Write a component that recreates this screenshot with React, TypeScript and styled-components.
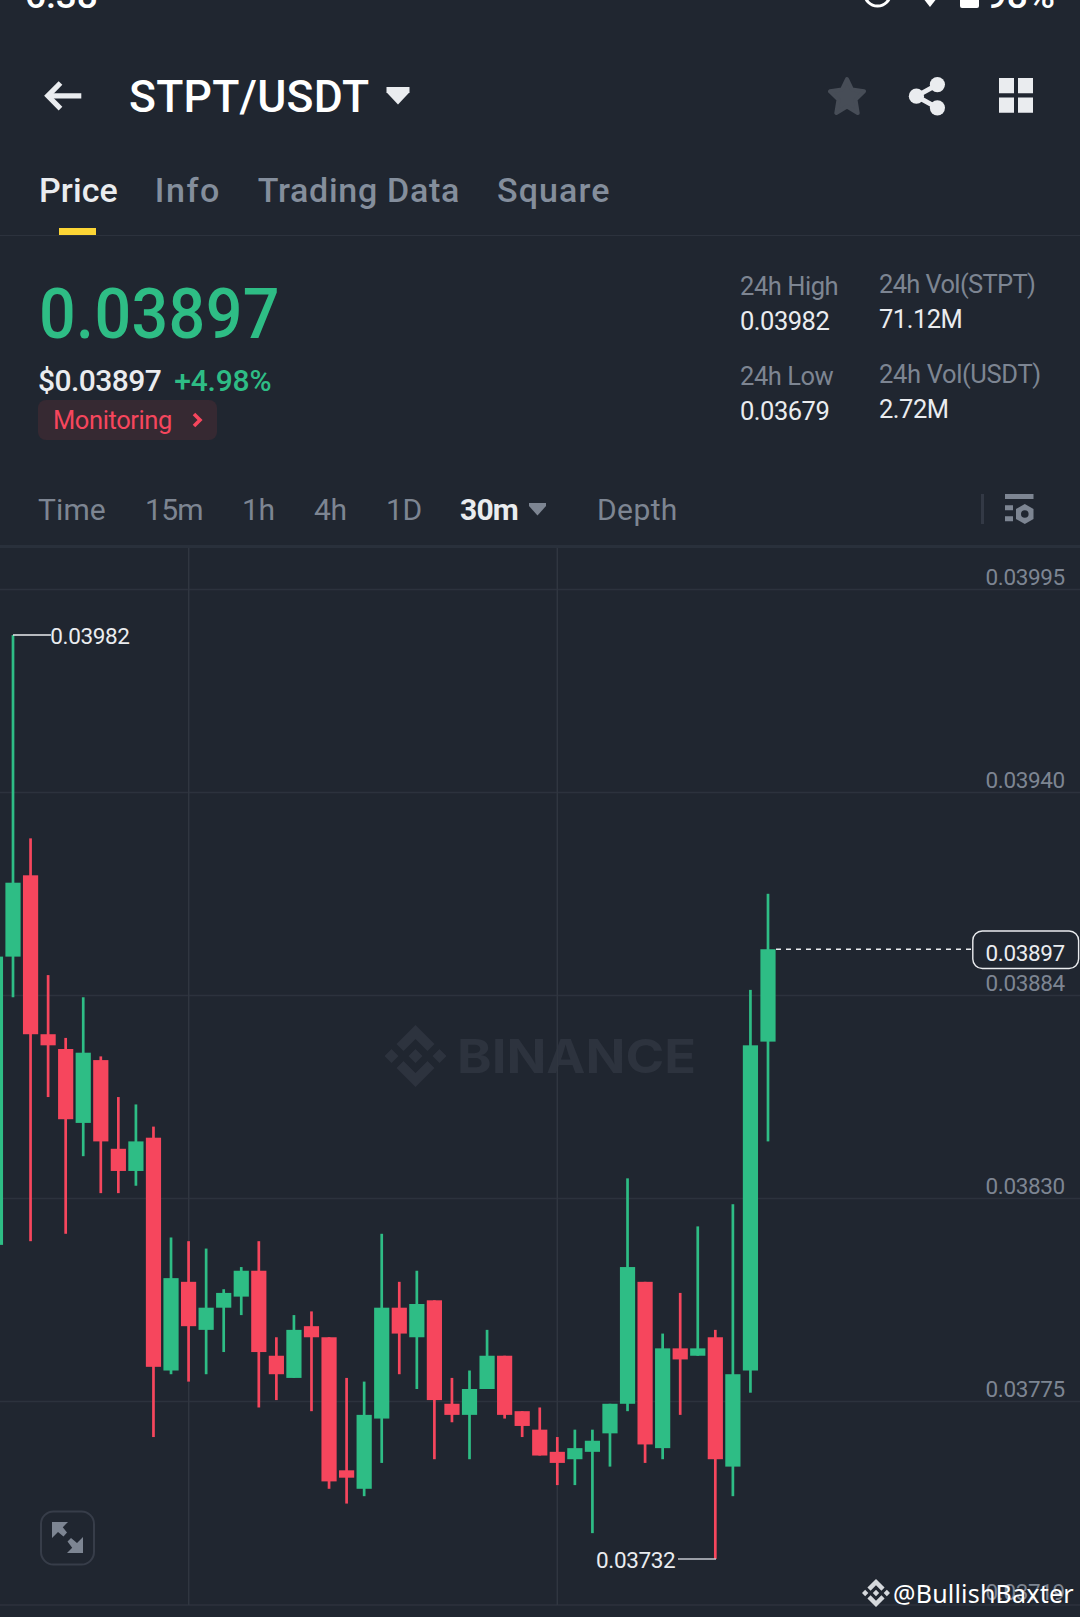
import React from "react";
import styled, { createGlobalStyle } from "styled-components";

const c = {
  bg: "#202630",
  line: "#2c323d",
  text: "#eaecef",
  muted: "#848e9c",
  dim: "#7d8592",
  green: "#2ebd85",
  red: "#f6465d",
  yellow: "#fcd535",
};

const GlobalStyle = createGlobalStyle`
  html, body { margin: 0; padding: 0; background: ${c.bg}; }
  * { box-sizing: border-box; }
`;

const Screen = styled.main`
  position: relative;
  display: flex;
  flex-direction: column;
  width: 1080px;
  height: 1617px;
  overflow: hidden;
  background: ${c.bg};
  color: ${c.text};
  font-family: Roboto, "Liberation Sans", sans-serif;
`;

const StatusBar = styled.div`
  display: flex;
  align-items: center;
  justify-content: space-between;
  flex: none;
  height: 52px;
  margin-top: -31px;
  padding: 0 25px 0 25px;
  color: #fff;
  font-size: 37px;
  font-weight: 500;
`;

const StatusIcons = styled.div`
  display: flex;
  align-items: center;
  gap: 7px;
`;

const Header = styled.header`
  display: flex;
  align-items: center;
  flex: none;
  height: 149px;
  padding: 0 46px 0 43px;
`;

const Pair = styled.h1`
  margin: 2px 17px 0 46px;
  color: #fff;
  font-size: 44.5px;
  font-weight: 500;
  line-height: 60px;
  letter-spacing: 0.25px;
`;

const Actions = styled.div`
  display: flex;
  align-items: center;
  gap: 42px;
  margin-left: auto;
`;

const Tabs = styled.nav`
  display: flex;
  flex: none;
  gap: 37px;
  height: 66px;
  padding-left: 39px;
  border-bottom: 1px solid ${c.line};
`;

const Tab = styled.div<{ $active?: boolean; $spacing: number }>`
  display: flex;
  flex-direction: column;
  justify-content: space-between;
  color: ${(p) => (p.$active ? c.text : c.muted)};
  font-size: 34px;
  font-weight: 500;
  line-height: 40px;
  letter-spacing: ${(p) => p.$spacing}px;
`;

const TabMarker = styled.div`
  width: 37px;
  height: 7px;
  margin-left: 20px;
  background: ${c.yellow};
`;

const Summary = styled.section`
  display: flex;
  flex: none;
  height: 240px;
  padding-left: 38px;
`;

const Quote = styled.div`
  display: flex;
  flex-direction: column;
  align-items: flex-start;
  width: 702px;
  padding-top: 36px;
`;

const LastPrice = styled.div`
  height: 83px;
  margin-left: 1px;
  color: ${c.green};
  font-size: 71px;
  font-weight: 500;
  line-height: 84px;
  letter-spacing: 0.4px;
  transform: scaleX(0.91);
  transform-origin: left center;
`;

const FiatRow = styled.div`
  display: flex;
  gap: 13px;
  margin-top: 6px;
  font-size: 30px;
  font-weight: 500;
  line-height: 39px;
  letter-spacing: -0.55px;
`;

const Change = styled.span`
  color: ${c.green};
  letter-spacing: -0.2px;
`;

const Tag = styled.div`
  display: flex;
  align-items: center;
  gap: 20px;
  width: 179px;
  height: 40px;
  padding-left: 15px;
  border-radius: 8px;
  background: #362932;
  color: ${c.red};
  font-size: 25.5px;
  letter-spacing: -0.4px;
`;

const StatColumn = styled.dl<{ $width: number; $top: number }>`
  display: flex;
  flex-direction: column;
  flex: none;
  width: ${(p) => p.$width}px;
  margin: 0;
  padding-top: ${(p) => p.$top}px;
  font-size: 25.5px;
  line-height: 35px;
  white-space: nowrap;
`;

const StatLabel = styled.dt<{ $spacing?: number }>`
  color: ${c.dim};
  letter-spacing: ${(p) => p.$spacing ?? -0.45}px;
`;

const StatValue = styled.dd`
  margin: 0 0 20px;
  color: ${c.text};
  letter-spacing: -0.5px;
`;

const Intervals = styled.nav`
  display: grid;
  grid-template-columns: 107px 97px 72px 72px 74px 137px 384px auto;
  align-items: center;
  flex: none;
  height: 72px;
  padding-left: 38px;
  padding-bottom: 3px;
  border-bottom: 3px solid #29303b;
`;

const Interval = styled.div<{ $active?: boolean; $spacing?: number }>`
  display: flex;
  align-items: center;
  gap: 11px;
  color: ${(p) => (p.$active ? c.text : c.dim)};
  font-size: 30px;
  font-weight: ${(p) => (p.$active ? 700 : 400)};
  letter-spacing: ${(p) => p.$spacing ?? -0.4}px;
`;

const Settings = styled.div`
  display: flex;
  align-items: center;
  gap: 21px;
`;

const Separator = styled.div`
  width: 3px;
  height: 30px;
  background: #333945;
`;

const ChartArea = styled.section`
  flex: none;
  height: 1069px;
`;

const Credit = styled.div`
  position: absolute;
  left: 862px;
  top: 1575px;
  display: flex;
  align-items: center;
  gap: 3px;
  height: 36px;
  color: #fff;
  font-family: "Noto Sans", sans-serif;
  font-size: 25px;
  letter-spacing: 0.2px;
  white-space: nowrap;
`;

type Candle = [open: number, high: number, low: number, close: number];

const candles: Candle[] = [
  [3817, 3895, 3817, 3895],
  [3895, 3982, 3884, 3915],
  [3917, 3927, 3818, 3874],
  [3874, 3890, 3857, 3871],
  [3870, 3873, 3820, 3851],
  [3850, 3884, 3841, 3869],
  [3867, 3868, 3831, 3845],
  [3843, 3857, 3831, 3837],
  [3837, 3855, 3833, 3845],
  [3846, 3849, 3765, 3784],
  [3783, 3819, 3782, 3808],
  [3807, 3818, 3780, 3795],
  [3794, 3816, 3782, 3800],
  [3800, 3805, 3788, 3804],
  [3803, 3811, 3798, 3810],
  [3810, 3818, 3773, 3788],
  [3787, 3792, 3775, 3782],
  [3781, 3798, 3781, 3794],
  [3795, 3799, 3772, 3792],
  [3792, 3792, 3751, 3753],
  [3756, 3781, 3747, 3754],
  [3751, 3780, 3749, 3771],
  [3770, 3820, 3758, 3800],
  [3800, 3807, 3782, 3793],
  [3792, 3810, 3778, 3801],
  [3802, 3802, 3759, 3775],
  [3774, 3781, 3769, 3771],
  [3771, 3783, 3759, 3778],
  [3778, 3794, 3778, 3787],
  [3787, 3787, 3770, 3771],
  [3772, 3772, 3765, 3768],
  [3767, 3773, 3760, 3760],
  [3761, 3765, 3752, 3758],
  [3759, 3767, 3752, 3762],
  [3761, 3767, 3739, 3764],
  [3766, 3774, 3757, 3774],
  [3774, 3835, 3772, 3811],
  [3807, 3807, 3758, 3763],
  [3762, 3793, 3759, 3789],
  [3789, 3804, 3771, 3786],
  [3787, 3822, 3787, 3789],
  [3792, 3794, 3732, 3759],
  [3757, 3828, 3749, 3782],
  [3783, 3886, 3777, 3871],
  [3872, 3912, 3845, 3897],
];

const CHART_TOP = 548;
const priceY = (ticks: number) => 635.1 + (3982 - ticks) * 3.6956;
const candleX = (index: number) => 13 + (index - 1) * 17.558;

const gridRows = [
  { y: 589.5, label: "0.03995" },
  { y: 792.5, label: "0.03940" },
  { y: 995.5, label: "0.03884" },
  { y: 1198.5, label: "0.03830" },
  { y: 1401.5, label: "0.03775" },
  { y: 1605, label: "0.03719" },
];

const ChartLabel = styled.text<{ $tone?: string }>`
  fill: ${(p) => p.$tone ?? c.dim};
  font-size: 22.5px;
  letter-spacing: -0.35px;
`;

const Brand = styled.text`
  fill: #2d333e;
  font-family: Inter, sans-serif;
  font-size: 46.5px;
  font-weight: 700;
`;

const BrandMark = ({ x = 0, y = 0, size, color }: { x?: number; y?: number; size: number; color: string }) => (
  <svg x={x} y={y} width={size} height={size} viewBox="0 0 62 62" fill={color}>
    <path d="M31 0 50 19 43 26 31 14 19 26 12 19Z" />
    <path d="M31 62 50 43 43 36 31 48 19 36 12 43Z" />
    <path d="M31 24 38 31 31 38 24 31ZM7 24 14 31 7 38 0 31ZM55 24 62 31 55 38 48 31Z" />
  </svg>
);

const Chart = () => (
  <svg width="1080" height="1069" viewBox={`0 ${CHART_TOP} 1080 1069`} display="block">
    <BrandMark x={384.5} y={1025} size={62} color="#2d333e" />
    <Brand x="457" y="1073" textLength="239" lengthAdjust="spacingAndGlyphs">BINANCE</Brand>
    {gridRows.map((row) => (
      <g key={row.label}>
        <line x1="0" x2="1080" y1={row.y} y2={row.y} stroke={c.line} strokeWidth="1.5" />
        <ChartLabel x="985.5" y={row.y - 5}>{row.label}</ChartLabel>
      </g>
    ))}
    {[188.7, 557.3].map((x) => (
      <line key={x} x1={x} x2={x} y1="548" y2="1605" stroke="#303640" strokeWidth="1.5" />
    ))}
    {candles.map(([open, high, low, close], i) => {
      const x = candleX(i);
      const top = priceY(Math.max(open, close));
      return (
        <g key={i} fill={close >= open ? c.green : c.red}>
          <rect x={x - 1.35} width="2.7" y={priceY(high)} height={priceY(low) - priceY(high)} />
          <rect x={x - 7.6} width="15.2" y={top} height={priceY(Math.min(open, close)) - top} />
        </g>
      );
    })}
    <line x1="13" x2="51" y1="635" y2="635" stroke={c.text} strokeWidth="1.5" />
    <ChartLabel x="50.3" y="644.3" $tone={c.text}>0.03982</ChartLabel>
    <line x1="678" x2="716" y1="1559" y2="1559" stroke="#c3c7ce" strokeWidth="1.5" />
    <ChartLabel x="596" y="1568" $tone={c.text}>0.03732</ChartLabel>
    <line x1="776" x2="972" y1="949.3" y2="949.3" stroke={c.text} strokeWidth="1.5" strokeDasharray="5 5" />
    <rect x="972.8" y="931" width="105.8" height="37.5" rx="9.5" fill={c.bg} stroke={c.text} strokeWidth="1.4" />
    <ChartLabel x="985.5" y="961" $tone={c.text}>0.03897</ChartLabel>
    <rect x="41" y="1511.5" width="53" height="53" rx="12.5" fill={c.bg} stroke="#373d49" strokeWidth="2" />
    <g fill={c.dim}>
      <path d="M52 1522H68L62.8 1527.2 67 1532.5 63.5 1536.5 58 1532 52 1538Z" />
      <path d="M83 1553H67L72.2 1547.8 67.5 1541.5 71 1538 77 1543 83 1537Z" />
    </g>
  </svg>
);

const App = () => (
  <>
    <GlobalStyle />
    <Screen>
      <StatusBar>
        <span>6:38</span>
        <StatusIcons>
          <svg width="120" height="52" viewBox="859 -31 120 52">
            <circle cx="877.5" cy="-7" r="13" fill="none" stroke="#fff" strokeWidth="3" />
            <path d="M912-16Q930-28 948-16L930 7Z" fill="#fff" />
            <rect x="960" y="-20" width="19" height="28" rx="2" fill="#fff" />
          </svg>
          <span>98%</span>
        </StatusIcons>
      </StatusBar>

      <Header>
        <svg width="40" height="40" viewBox="43 76 40 40" fill="none" stroke={c.text} strokeWidth="5.2">
          <path d="M81.3 95.8H48" />
          <path d="M60.5 83 47.8 95.8 60.5 108.6" />
        </svg>
        <Pair>STPT/USDT</Pair>
        <svg width="24" height="18" viewBox="0 0 24 18" fill={c.text}>
          <path d="M.5 0H23.5V5.3L12 17.5.5 5.3Z" />
        </svg>
        <Actions>
          <svg width="38" height="40" viewBox="0 0 38 40" fill="#474d57" stroke="#474d57" strokeWidth="4" strokeLinejoin="round">
            <path d="M19 3 24 13.5 36 15.3 27.5 23.7 29.7 37 19 30.6 8.3 37 10.5 23.7 2 15.3 14 13.5Z" />
          </svg>
          <svg width="38" height="40" viewBox="909 75 38 40" fill={c.text}>
            <path d="M938.4 83.6 917.4 95.2 938.4 106.8" fill="none" stroke={c.text} strokeWidth="4.8" />
            <circle cx="938.4" cy="83.6" r="7.6" />
            <circle cx="917.4" cy="95.2" r="7.6" />
            <circle cx="938.4" cy="106.8" r="7.6" />
          </svg>
          <svg width="46" height="35" viewBox="0 0 46 35" fill={c.text}>
            <path d="M11 0H26V15.3H11ZM30 0H45V15.3H30ZM11 19.4H26V34.7H11ZM30 19.4H45V34.7H30Z" />
          </svg>
        </Actions>
      </Header>

      <Tabs>
        <Tab $active $spacing={0.1}>
          Price
          <TabMarker />
        </Tab>
        <Tab $spacing={1.5}>Info</Tab>
        <Tab $spacing={0.7}>Trading Data</Tab>
        <Tab $spacing={1.1}>Square</Tab>
      </Tabs>

      <Summary>
        <Quote>
          <LastPrice>0.03897</LastPrice>
          <FiatRow>
            <span>$0.03897</span>
            <Change>+4.98%</Change>
          </FiatRow>
          <Tag>
            Monitoring
            <svg width="11" height="16" viewBox="0 0 11 16" fill="none" stroke={c.red} strokeWidth="3.6">
              <path d="M2 2 8 8 2 14" />
            </svg>
          </Tag>
        </Quote>
        <StatColumn $width={139} $top={32.5}>
          <StatLabel>24h High</StatLabel>
          <StatValue>0.03982</StatValue>
          <StatLabel>24h Low</StatLabel>
          <StatValue>0.03679</StatValue>
        </StatColumn>
        <StatColumn $width={180} $top={30.5}>
          <StatLabel $spacing={-0.65}>24h Vol(STPT)</StatLabel>
          <StatValue>71.12M</StatValue>
          <StatLabel $spacing={-0.35}>24h Vol(USDT)</StatLabel>
          <StatValue>2.72M</StatValue>
        </StatColumn>
      </Summary>

      <Intervals>
        <Interval $spacing={0.1}>Time</Interval>
        <Interval $spacing={-0.7}>15m</Interval>
        <Interval>1h</Interval>
        <Interval>4h</Interval>
        <Interval>1D</Interval>
        <Interval $active $spacing={-0.8}>
          30m
          <svg width="17" height="13" viewBox="0 0 17 13" fill={c.dim}>
            <path d="M0 0H17V3L8.5 12.5 0 3Z" />
          </svg>
        </Interval>
        <Interval $spacing={0.4}>Depth</Interval>
        <Settings>
          <Separator />
          <svg width="29" height="30" viewBox="0 0 29 30" fill={c.dim}>
            <path d="M0 0H28.5V5H0ZM0 11.3H8V16.3H0ZM0 22.3H8V27.3H0Z" />
            <path fillRule="evenodd" d="M19.8 10 28.5 15V25L19.8 30 11 25V15ZM19.8 16.2A3.8 3.8 0 1 0 19.8 23.8 3.8 3.8 0 1 0 19.8 16.2Z" />
          </svg>
        </Settings>
      </Intervals>

      <ChartArea>
        <Chart />
      </ChartArea>

      <Credit>
        <BrandMark size={28} color="#d5d8dc" />
        <span>@BullishBaxter</span>
      </Credit>
    </Screen>
  </>
);

export default App;
